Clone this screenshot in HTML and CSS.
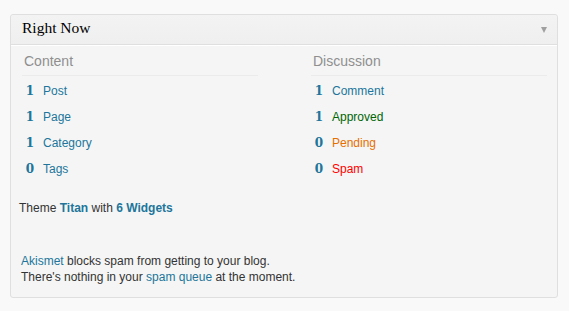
FILE: index.html
```html
<!DOCTYPE html>
<html>
<head>
<meta charset="utf-8">
<link rel="stylesheet" href="styles.css">
</head>
<body>
<div class="box">
  <div class="box-head">
    <h3 class="box-title">Right Now</h3>
    <span class="caret"></span>
  </div>
  <div class="inside">
    <div class="tables">
      <div class="col">
        <p class="sub">Content</p>
        <ul class="rows">
          <li><span class="num">1</span><a class="lbl">Post</a></li>
          <li><span class="num">1</span><a class="lbl">Page</a></li>
          <li><span class="num">1</span><a class="lbl">Category</a></li>
          <li><span class="num">0</span><a class="lbl">Tags</a></li>
        </ul>
      </div>
      <div class="col">
        <p class="sub">Discussion</p>
        <ul class="rows">
          <li><span class="num">1</span><a class="lbl">Comment</a></li>
          <li><span class="num">1</span><a class="lbl approved">Approved</a></li>
          <li><span class="num">0</span><a class="lbl pending">Pending</a></li>
          <li><span class="num">0</span><a class="lbl spam">Spam</a></li>
        </ul>
      </div>
    </div>
    <p class="versions">Theme <a class="strong">Titan</a> with <a class="strong">6 Widgets</a></p>
    <p class="akismet"><a class="link">Akismet</a> blocks spam from getting to your blog.<br>There's nothing in your <a class="link">spam queue</a> at the moment.</p>
  </div>
</div>
</body>
</html>
```
FILE: styles.css
```css
html, body {
  margin: 0;
  padding: 0;
  background: #f9f9f9;
}
body {
  padding: 14px 11px 0 10px;
  font-family: "Liberation Sans", Arial, sans-serif;
  font-size: 12px;
  color: #333;
}
.box {
  box-sizing: border-box;
  width: 548px;
  border: 1px solid #dfdfdf;
  border-radius: 3px;
  background: #f5f5f5;
}
.box-head {
  display: flex;
  align-items: flex-start;
  justify-content: space-between;
  height: 29px;
  padding: 0 10px 0 11px;
  background: linear-gradient(#f3f3f3, #efefef);
  border-bottom: 1px solid #dfdfdf;
  box-shadow: 0 1px 0 #fff;
  border-radius: 3px 3px 0 0;
}
.box-title {
  margin: 0;
  font-family: "Liberation Serif", "Times New Roman", serif;
  font-weight: normal;
  font-size: 15.5px;
  line-height: 25px;
  color: #000;
}
.caret {
  width: 0;
  height: 0;
  margin-top: 12px;
  border-left: 3.5px solid transparent;
  border-right: 3.5px solid transparent;
  border-top: 6px solid #a0a0a0;
}
.inside {
  padding: 7px 10px 12px 8px;
}
.tables {
  display: flex;
  justify-content: space-between;
  margin-left: 3px;
}
.col {
  width: 236px;
}
.sub {
  margin: 0;
  padding: 0 0 5px 2px;
  font-size: 14px;
  line-height: 18px;
  color: #8f8f8f;
  border-bottom: 1px solid #ebebeb;
}
.rows {
  list-style: none;
  margin: 0;
  padding: 2px 0 0;
}
.rows li {
  display: grid;
  grid-template-columns: 12px 1fr;
  column-gap: 9px;
  align-items: baseline;
  line-height: 26px;
  height: 26px;
}
.num {
  text-align: right;
  font-family: "DejaVu Serif", "Liberation Serif", serif;
  font-weight: bold;
  font-size: 12px;
  color: #21759b;
}
.lbl {
  color: #21759b;
}
.approved { color: #006505; }
.pending { color: #e66f00; }
.spam { color: #ff0000; }
.versions {
  margin: 17px 0 0;
  line-height: 18px;
  color: #333;
}
.strong {
  font-weight: bold;
  color: #21759b;
}
.akismet {
  margin: 36px 0 0 2px;
  line-height: 16px;
  color: #333;
}
.link {
  color: #21759b;
}
```
